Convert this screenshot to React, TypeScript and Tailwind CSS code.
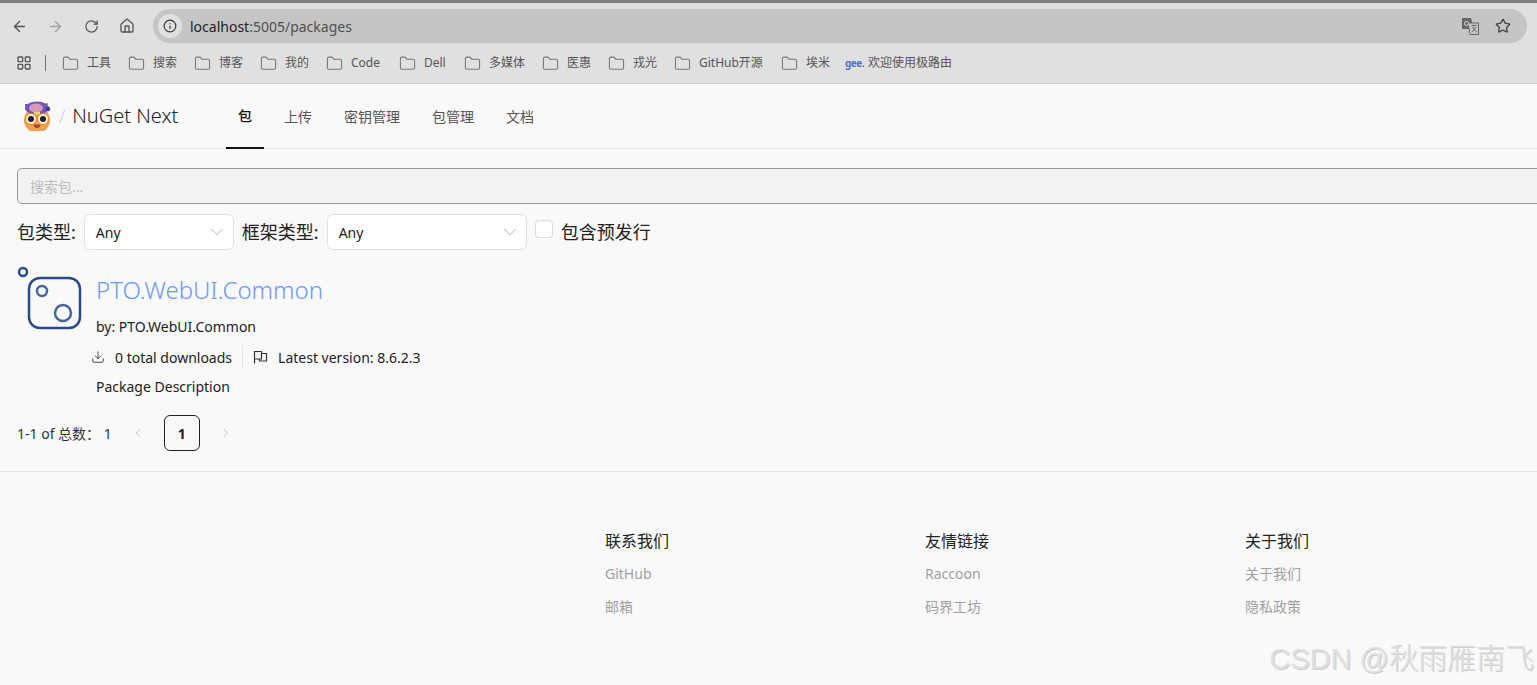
import { ArrowLeft, ArrowRight, ChevronDown, ChevronLeft, ChevronRight, Download, Folder, Home, Info, LayoutGrid, RotateCw, Star } from 'lucide-react';

const SANS = "font-['Noto_Sans','Noto_Sans_CJK_SC',sans-serif]";

const bookmarks = [
  { label: '工具', width: 'w-[66px]' },
  { label: '搜索', width: 'w-[66px]' },
  { label: '博客', width: 'w-[66px]' },
  { label: '我的', width: 'w-[66px]' },
  { label: 'Code', width: 'w-[73px]' },
  { label: 'Dell', width: 'w-[65px]' },
  { label: '多媒体', width: 'w-[78px]' },
  { label: '医惠', width: 'w-[66px]' },
  { label: '戎光', width: 'w-[66px]' },
  { label: 'GitHub开源', width: 'w-[107px]' },
  { label: '埃米', width: 'w-[64px]' },
];

const navItems = ['包', '上传', '密钥管理', '包管理', '文档'];

const footerColumns = [
  { title: '联系我们', links: ['GitHub', '邮箱'] },
  { title: '友情链接', links: ['Raccoon', '码界工坊'] },
  { title: '关于我们', links: ['关于我们', '隐私政策'] },
];

function BrowserChrome() {
  return (
    <div className="border-b border-[#cbcbcb] bg-[#e0e0e0]">
      <div className="h-[3px] bg-[#7f7f7f]" />
      <div className="flex h-[46px] items-center pr-[10px] pl-[11px]">
        <ArrowLeft size={17} strokeWidth={2} className="text-[#555]" />
        <ArrowRight size={17} strokeWidth={2} className="ml-[19px] text-[#a2a2a2]" />
        <RotateCw size={15} strokeWidth={2} className="ml-[20px] text-[#555]" />
        <Home size={16} strokeWidth={2} className="ml-[20px] text-[#555]" />
        <div className="ml-[18px] flex h-[34px] flex-1 items-center rounded-full bg-[#c5c5c5] pr-4 pl-[5px]">
          <div className="flex h-[24px] w-[24px] items-center justify-center rounded-full bg-[#e0e0e0]">
            <Info size={14} strokeWidth={2} className="text-[#333]" />
          </div>
          <span className="ml-[8px] text-[14px] text-[#222]">
            localhost<span className="text-[#4f4f4f]">:5005/packages</span>
          </span>
          <div className="ml-auto flex items-center gap-[16px]">
            <Translate />
            <Star size={16} strokeWidth={2} className="text-[#444]" />
          </div>
        </div>
      </div>
      <div className="flex h-[28px] items-center text-[12px] text-[#555] mb-[6px] pl-[16px]">
        <LayoutGrid size={16} strokeWidth={2} className="text-[#555]" />
        <div className="mr-[16px] ml-[13px] h-[16px] w-px bg-[#777]" />
        {bookmarks.map((b) => (
          <div key={b.label} className={`flex items-center gap-[8px] ${b.width}`}>
            <Folder size={17} strokeWidth={1.5} className="shrink-0 text-[#777]" />
            <span className="whitespace-nowrap">{b.label}</span>
          </div>
        ))}
        <span className="w-[23px] text-[10px] leading-none font-bold tracking-tighter text-[#4a78c8]">gee.</span>
        <span className="whitespace-nowrap">欢迎使用极路由</span>
      </div>
    </div>
  );
}

function Translate() {
  return (
    <svg width="17" height="17" viewBox="0 0 17 17" aria-hidden="true">
      <path d="M0 0h9l3 11H1a1 1 0 0 1-1-1z" fill="#666" />
      <path d="M6 5h10.5v11.5H8z" fill="#c5c5c5" stroke="#666" />
      <path d="M9.5 7.5h5M12 7.500v1M10 14l4-5M10.500 9l4 5" stroke="#666" fill="none" />
      <circle cx="4.500" cy="5.500" r="2" fill="none" stroke="#ddd" />
    </svg>
  );
}

function Logo() {
  return (
    <svg width="28" height="30" viewBox="0 0 28 30" aria-hidden="true">
      <circle cx="14" cy="19" r="13" fill="#eda24e" />
      <ellipse cx="14" cy="7" rx="12" ry="6.500" fill="#6f55b8" />
      <ellipse cx="13" cy="7" rx="7" ry="4.500" fill="#d49ab8" />
      <circle cx="25" cy="8" r="2.200" fill="#3f379c" />
      <circle cx="24" cy="3" r="1" fill="#4c9a5a" />
      <circle cx="3" cy="4" r="1" fill="#3f379c" />
      <rect x="11" y="11" width="6" height="2.500" fill="#f7d65a" />
      <circle cx="8" cy="18" r="5.500" fill="#fff3d8" stroke="#d9862c" />
      <circle cx="20" cy="18" r="5.500" fill="#fff3d8" stroke="#d9862c" />
      <circle cx="8" cy="18" r="3" fill="#2b1c28" />
      <circle cx="20" cy="18" r="3" fill="#2b1c28" />
      <path d="M10.500 23.500h7a3.500 3.500 0 0 1-7 0z" fill="#b33a3a" />
    </svg>
  );
}

function Header() {
  return (
    <div className="flex h-[65px] items-stretch border-b border-[#e5e5e5] pl-[23px]">
      <div className="flex w-[203px] items-center">
        <Logo />
        <span className="ml-[8px] text-[18px] font-light text-[#d0d0d0]">/</span>
        <span className="ml-[7px] text-[20px] font-light text-[#222]">NuGet Next</span>
      </div>
      <div className="flex text-[14px] text-[#555]">
        {navItems.map((item, i) => (
          <div
            key={item}
            className={
              i === 0
                ? 'relative -mb-px mr-[4px] flex items-center border-b-2 border-[#111] px-[12px] font-medium text-[#111]'
                : 'flex items-center px-[16px]'
            }
          >
            {item}
          </div>
        ))}
      </div>
    </div>
  );
}

function Filters() {
  return (
    <div className="mt-[10px] flex h-[36px] items-center pl-[17px] text-[18px] text-[#222]">
      <span className="whitespace-nowrap">包类型:</span>
      <SelectBox className="ml-[8px] w-[150px]" />
      <span className="ml-[8px] whitespace-nowrap">框架类型:</span>
      <SelectBox className="ml-[8px] w-[200px]" />
      <div className="mb-[6px] ml-[8px] h-[18px] w-[18px] rounded-[4px] border border-[#d9d9d9] bg-white" />
      <span className="ml-[8px]">包含预发行</span>
    </div>
  );
}

function SelectBox({ className }: { className: string }) {
  return (
    <div className={`flex h-[36px] shrink-0 items-center justify-between rounded-[6px] border border-[#e0e0e0] bg-white pr-[5px] pl-[11px] text-[14px] text-[#222] ${className}`}>
      Any
      <ChevronDown size={22} strokeWidth={0.7} className="text-[#888]" />
    </div>
  );
}

function PackageIcon() {
  return (
    <svg width="66" height="66" viewBox="0 0 66 66" className="shrink-0" aria-hidden="true">
      <circle cx="6" cy="6" r="4" fill="none" stroke="#2b4a8a" strokeWidth="2.500" />
      <rect x="12" y="12" width="51" height="50" rx="11" fill="none" stroke="#2b4a8a" strokeWidth="2.500" />
      <circle cx="25" cy="25" r="5" fill="none" stroke="#46659f" strokeWidth="2.500" />
      <circle cx="46" cy="47" r="8" fill="none" stroke="#46659f" strokeWidth="2.500" />
    </svg>
  );
}

function FlagIcon() {
  return (
    <svg width="15" height="14" viewBox="0 0 15 14" fill="none" stroke="#333" strokeWidth="1.200" className="shrink-0" aria-hidden="true">
      <path d="M1.500 13.500V1.500h7v7.500h-7M8.500 3.500h5v7.500H6.500V9" />
    </svg>
  );
}

function PackageRow() {
  return (
    <div className="mt-[16px] flex pl-[17px]">
      <PackageIcon />
      <div className="ml-[13px] text-[14px] text-[#222]">
        <div className="mt-[6px] text-[24px] leading-[36px] font-light text-[#6b97ff]">PTO.WebUI.Common</div>
        <div className="mt-[9px] leading-[20px]">by: PTO.WebUI.Common</div>
        <div className="mt-[10px] -ml-[5px] flex h-[20px] items-center">
          <Download size={14} strokeWidth={1.500} className="text-[#333]" />
          <span className="ml-[10px]">0 total downloads</span>
          <div className="mx-[10px] h-[24px] w-px bg-[#e2e2e2]" />
          <FlagIcon />
          <span className="ml-[10px]">Latest version: 8.6.2.3</span>
        </div>
        <div className="mt-[10px] leading-[20px]">Package Description</div>
      </div>
    </div>
  );
}

function Pager() {
  return (
    <div className="mt-[18px] flex h-[36px] items-center pl-[17px] text-[14px] text-[#333]">
      <span>1-1 of 总数： 1</span>
      <ChevronLeft size={14} strokeWidth={1.500} className="ml-[19px] text-[#b5b5b5]" />
      <div className="ml-[19px] flex h-[36px] w-[36px] items-center justify-center rounded-[6px] border border-[#222] text-[14px] font-bold text-[#222]">
        1
      </div>
      <ChevronRight size={14} strokeWidth={1.500} className="ml-[19px] text-[#b5b5b5]" />
    </div>
  );
}

function Footer() {
  return (
    <div className="mt-[20px] flex border-t border-[#e5e5e5] pt-[57px] pl-[605px]">
      {footerColumns.map((col) => (
        <div key={col.title} className="w-[320px] shrink-0">
          <div className="text-[16px] leading-[24px] text-[#222]">{col.title}</div>
          <div className="mt-[11px] text-[14px] leading-[20px] text-[#a0a0a0]">{col.links[0]}</div>
          <div className="mt-[13px] text-[14px] leading-[20px] text-[#a0a0a0]">{col.links[1]}</div>
        </div>
      ))}
    </div>
  );
}

export default function App() {
  return (
    <div className={`relative h-[685px] w-[1537px] overflow-hidden bg-[#f9f9f9] ${SANS}`}>
      <BrowserChrome />
      <Header />
      <div className="mt-[19px] ml-[17px] flex h-[36px] w-[1540px] items-center rounded-[5px] border border-[#999] bg-[#f2f2f2] pl-[12px] text-[14px] text-[#bdbdbd]">
        搜索包...
      </div>
      <Filters />
      <PackageRow />
      <Pager />
      <Footer />
      <div className="absolute right-[3px] bottom-[8px] font-['Liberation_Sans','Noto_Sans_CJK_SC',sans-serif] text-[29px] leading-[36px] font-light whitespace-nowrap text-[#e0e0e0] [text-shadow:1px_1px_0_#cdcdcd]">
        CSDN @秋雨雁南飞
      </div>
    </div>
  );
}
